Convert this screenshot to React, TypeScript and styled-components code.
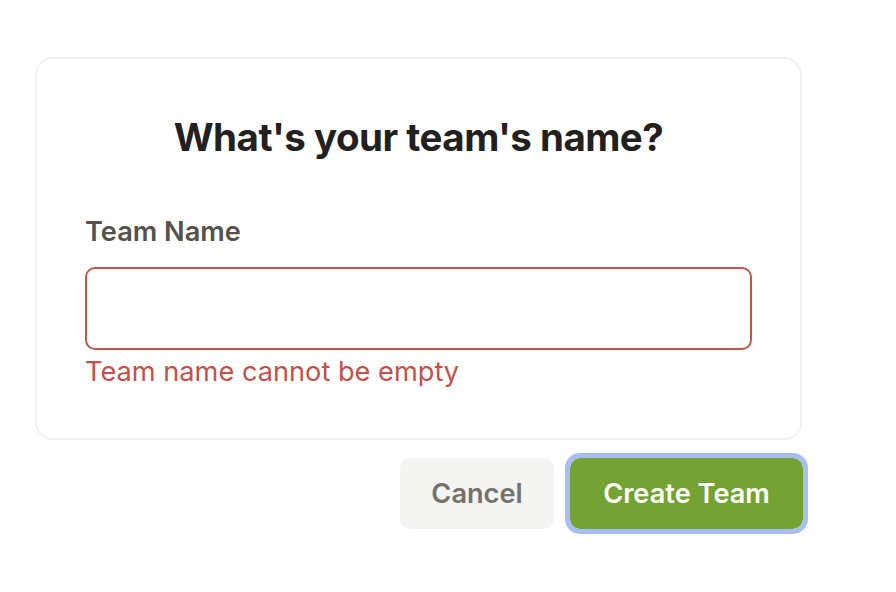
import styled, { createGlobalStyle } from 'styled-components'

const GlobalStyle = createGlobalStyle`
  body {
    margin: 0;
    background: #ffffff;
    font-family: Inter, "Noto Sans", "Liberation Sans", sans-serif;
  }
  * {
    box-sizing: border-box;
  }
`

const StyledWrapper = styled.div`
  width: 767px;
  margin: 57px 0 0 35px;
  padding-bottom: 20px;
`

const Card = styled.form`
  border: 2px solid #f1f1f1;
  border-radius: 18px;
  padding: 54px 48px 50px;
  display: flex;
  flex-direction: column;
`

const Title = styled.h1`
  margin: 0;
  font-size: 38.5px;
  letter-spacing: -0.5px;
  line-height: 1.25;
  font-weight: 700;
  color: #222120;
  text-align: center;
`

const Label = styled.label`
  margin-top: 55px;
  font-size: 27.2px;
  line-height: 1.2;
  font-weight: 600;
  color: #55524d;
`

const Input = styled.input<{ $invalid?: boolean }>`
  margin-top: 18px;
  width: 100%;
  height: 83px;
  padding: 0 20px;
  font: inherit;
  font-size: 27.2px;
  border: 2px solid ${(p) => (p.$invalid ? '#c1564b' : '#dddddd')};
  border-radius: 10px;
  outline: none;
  background: #ffffff;
`

const ErrorText = styled.div`
  margin-top: 6px;
  font-size: 27.2px;
  line-height: 1.2;
  color: #c1514a;
`

const Actions = styled.div`
  margin-top: 18px;
  display: flex;
  justify-content: flex-end;
  gap: 16px;
`

const Button = styled.button<{ $primary?: boolean }>`
  height: 71px;
  width: ${(p) => (p.$primary ? '233px' : '154px')};
  border: none;
  border-radius: 10px;
  font-family: inherit;
  font-size: 27.2px;
  font-weight: 600;
  cursor: pointer;
  background: ${(p) => (p.$primary ? '#74a233' : '#f4f4f3')};
  color: ${(p) => (p.$primary ? '#ffffff' : '#75716d')};
  outline: ${(p) => (p.$primary ? '5px solid #a6bdf5' : 'none')};
  outline-offset: 0;
  margin-right: ${(p) => (p.$primary ? '-1px' : '0')};
`

export default function App() {
  return (
    <>
      <GlobalStyle />
      <StyledWrapper>
        <Card onSubmit={(e) => e.preventDefault()}>
          <Title>What's your team's name?</Title>
          <Label htmlFor="team-name">Team Name</Label>
          <Input id="team-name" $invalid />
          <ErrorText>Team name cannot be empty</ErrorText>
        </Card>
        <Actions>
          <Button type="button">Cancel</Button>
          <Button type="button" $primary>
            Create Team
          </Button>
        </Actions>
      </StyledWrapper>
    </>
  )
}
